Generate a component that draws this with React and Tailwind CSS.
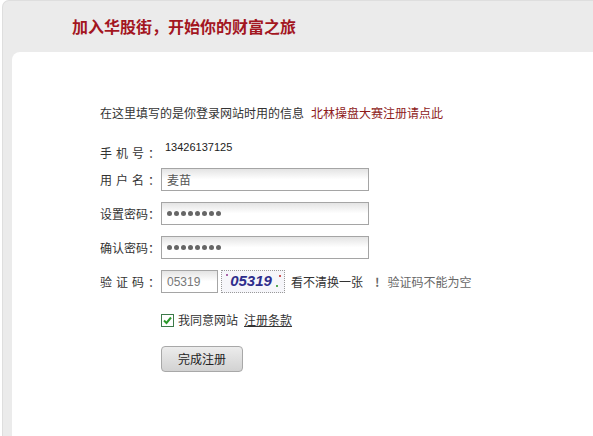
import React from 'react';

const cjk = { fontFamily: '"Noto Sans CJK SC", "Liberation Sans", sans-serif' };

const Label = ({ chars }) => (
  <div className="flex justify-between w-[60px] mr-[1px] text-[12px] text-[#333] shrink-0">
    {chars.map((c, i) => (
      <span key={i}>{c}</span>
    ))}
  </div>
);

const Dots = () => (
  <div className="flex gap-[2px] items-center">
    {Array.from({ length: 8 }).map((_, i) => (
      <div key={i} className="w-[5px] h-[5px] rounded-full bg-[#666]" />
    ))}
  </div>
);

const Field = ({ children, width = 'w-[208px]' }) => (
  <div className={`${width} h-[23px] border border-[#a5a5a5] bg-gradient-to-b from-[#e4e4e4] via-white to-white flex items-center px-[5px] text-[12px] text-[#555]`}>
    {children}
  </div>
);

export default function App() {
  return (
    <div className="w-[593px] h-[436px] bg-white pl-[2px] overflow-hidden" style={cjk}>
      <div className="h-full bg-[#ebebeb] rounded-tl-[7px] border-l border-t border-[#dedede] flex flex-col">
        {/* title */}
        <div className="h-[51px] pl-[69px] pt-[13px]">
          <span className="text-[16px] font-bold text-[#a3161f] leading-[24px]">加入华股街，开始你的财富之旅</span>
        </div>

        {/* form panel */}
        <div className="flex-1 ml-[9px] bg-white rounded-tl-[8px] pl-[88px] pt-[53px] flex flex-col">
          <div className="h-4 flex items-center text-[12px] text-[#333]">
            在这里填写的是你登录网站时用的信息
            <span className="ml-[7px] text-[#8e1a1a]">北林操盘大赛注册请点此</span>
          </div>

          <div className="mt-[20px] h-[23px] flex items-center">
            <Label chars={['手', '机', '号', '：']} />
            <span className="ml-[4px] -mt-[10px] text-[11px] text-[#222]" style={{ fontFamily: '"Liberation Sans", sans-serif' }}>13426137125</span>
          </div>

          <div className="mt-[4px] h-[23px] flex items-center">
            <Label chars={['用', '户', '名', '：']} />
            <Field>麦苗</Field>
          </div>

          <div className="mt-[11px] h-[23px] flex items-center">
            <Label chars={['设', '置', '密', '码', '：']} />
            <Field><Dots /></Field>
          </div>

          <div className="mt-[11px] h-[23px] flex items-center">
            <Label chars={['确', '认', '密', '码', '：']} />
            <Field><Dots /></Field>
          </div>

          <div className="mt-[11px] h-[23px] flex items-center">
            <Label chars={['验', '证', '码', '：']} />
            <Field width="w-[57px]">
              <span className="text-[#777]" style={{ fontFamily: '"Liberation Sans", sans-serif' }}>05319</span>
            </Field>
            <div className="ml-[3px] w-[64px] h-[23px] border border-dotted border-[#999] bg-[#f6f6fa] flex items-center justify-center relative">
              <span className="italic font-bold text-[15px] text-[#2e2d8c] -ml-[4px]" style={{ fontFamily: '"Liberation Sans", sans-serif' }}>05319</span>
              <span className="absolute right-[3px] top-[4px] w-[2px] h-[2px] bg-[#c55]" />
              <span className="absolute right-[6px] bottom-[5px] w-[2px] h-[2px] bg-[#5a5]" />
              <span className="absolute left-[4px] top-[3px] w-[2px] h-[2px] bg-[#a6a]" />
            </div>
            <span className="ml-[6px] text-[12px] text-[#333]">看不清换一张</span>
            <span className="ml-[12px] text-[12px] font-bold text-[#666]">!</span>
            <span className="ml-[8px] text-[12px] text-[#666]">验证码不能为空</span>
          </div>

          <div className="mt-[19px] h-4 flex items-center pl-[61px] text-[12px] text-[#333]">
            <div className="w-[13px] h-[13px] border border-[#3d7a4a] bg-white flex items-center justify-center">
              <svg width="9" height="9" viewBox="0 0 9 9">
                <path d="M1 4.5 L3.5 7 L8 1.5" fill="none" stroke="#2b9a2b" strokeWidth="2" />
              </svg>
            </div>
            <span className="ml-[4px]">我同意网站</span>
            <span className="ml-[6px] underline">注册条款</span>
          </div>

          <div className="mt-[17px] pl-[61px]">
            <button className="w-[82px] h-[26px] rounded-[4px] border border-[#a8a8a8] bg-gradient-to-b from-[#ececec] to-[#d2d2d2] text-[12px] text-[#222]">
              完成注册
            </button>
          </div>
        </div>
      </div>
    </div>
  );
}
